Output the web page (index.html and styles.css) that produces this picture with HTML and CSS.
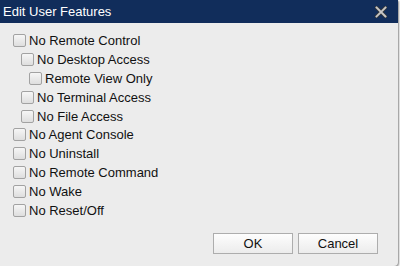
FILE: index.html
```html
<!DOCTYPE html>
<html lang="en">
<head>
    <meta charset="UTF-8">
    <meta name="viewport" content="width=device-width, initial-scale=1.0">
    <title>Edit User Features</title>
    <link rel="stylesheet" href="styles.css">
</head>
<body>
    <div class="dialog">
        <div class="dialog-title">
            <span>Edit User Features</span>
            <!-- close button -->
            <svg class="closeBtn" width="12" height="12" viewBox="0 0 12 12">
                <path d="M1.5 1.5 L10.5 10.5 M10.5 1.5 L1.5 10.5" stroke="#3a3a3a" stroke-width="3.4" stroke-linecap="square"/>
                <path d="M1.5 1.5 L10.5 10.5 M10.5 1.5 L1.5 10.5" stroke="#c8c8c8" stroke-width="1.8" stroke-linecap="square"/>
            </svg>
        </div>
        <div class="dialog-body">
            <div class="features">
                <label class="feature"><input type="checkbox"> No Remote Control</label>
                <label class="feature lvl1"><input type="checkbox"> No Desktop Access</label>
                <label class="feature lvl2"><input type="checkbox"> Remote View Only</label>
                <label class="feature lvl1"><input type="checkbox"> No Terminal Access</label>
                <label class="feature lvl1"><input type="checkbox"> No File Access</label>
                <label class="feature"><input type="checkbox"> No Agent Console</label>
                <label class="feature"><input type="checkbox"> No Uninstall</label>
                <label class="feature"><input type="checkbox"> No Remote Command</label>
                <label class="feature"><input type="checkbox"> No Wake</label>
                <label class="feature"><input type="checkbox"> No Reset/Off</label>
            </div>
            <div class="buttons">
                <button class="btn">OK</button>
                <button class="btn">Cancel</button>
            </div>
        </div>
    </div>
</body>
</html>
```

FILE: styles.css
```css
body {
    font-family: "Liberation Sans", Arial, sans-serif;
    margin: 0;
    background-color: #ffffff;
}
.dialog {
    width: 398px;
    height: 266px;
    background-color: #ececec;
    border-bottom-right-radius: 4px;
    box-shadow: 1px 1px 2px #8a8a8a;
    display: flex;
    flex-direction: column;
}
.dialog-title {
    height: 23px;
    background-color: #112d5b;
    color: #fff;
    font-size: 13px;
    display: flex;
    align-items: center;
    justify-content: space-between;
    padding: 0 11px 0 3px;
}
.dialog-body {
    flex: 1;
    display: flex;
    flex-direction: column;
    padding: 8px 20px 0 13px;
}
.features {
    display: flex;
    flex-direction: column;
}
.feature {
    display: flex;
    align-items: center;
    height: 18.9px;
    font-size: 13px;
    color: #111;
}
.feature input {
    appearance: none;
    width: 13px;
    height: 13px;
    margin: 0 3px 0 0;
    border: 1px solid #a2a2a2;
    border-radius: 2px;
    background: linear-gradient(#f6f6f6, #dedede);
}
.lvl1 {
    padding-left: 8px;
}
.lvl2 {
    padding-left: 16px;
}
.buttons {
    display: flex;
    justify-content: flex-end;
    gap: 5px;
    margin-top: 13px;
}
.btn {
    width: 80px;
    height: 21px;
    font-family: "Liberation Sans", Arial, sans-serif;
    font-size: 13px;
    color: #111;
    background: linear-gradient(#fdfdfd, #ececec);
    border: 1px solid #adadad;
    border-radius: 0;
    padding: 0;
}
```
